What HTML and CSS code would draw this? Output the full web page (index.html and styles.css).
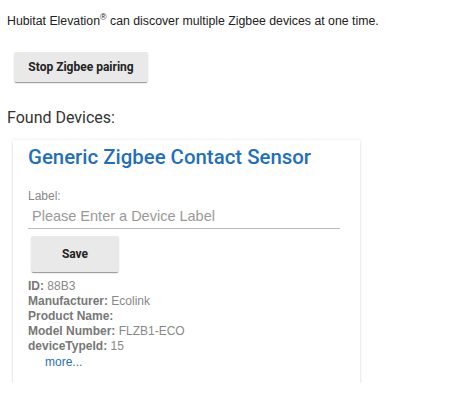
FILE: index.html
```html
<!DOCTYPE html>
<html>
<head>
<meta charset="utf-8">
<link rel="stylesheet" href="styles.css">
</head>
<body>
<div class="page">
  <p class="intro">Hubitat Elevation<sup>®</sup> can discover multiple Zigbee devices at one time.</p>
  <button class="btn stop">Stop Zigbee pairing</button>
  <h3 class="found">Found Devices:</h3>
  <div class="card">
    <h2 class="title">Generic Zigbee Contact Sensor</h2>
    <label class="label">Label:</label>
    <div class="field"><input class="input" type="text" placeholder="Please Enter a Device Label"></div>
    <button class="btn save">Save</button>
    <div class="info">
      <div><b>ID:</b> 88B3</div>
      <div><b>Manufacturer:</b> Ecolink</div>
      <div><b>Product Name:</b></div>
      <div><b>Model Number:</b> FLZB1-ECO</div>
      <div><b>deviceTypeId:</b> 15</div>
      <div class="more">more...</div>
    </div>
  </div>
</div>
</body>
</html>
```
FILE: styles.css
```css
html, body { margin: 0; padding: 0; background: #fff; }
.page { padding: 0 0 0 7px; font-family: "Liberation Sans", Arial, sans-serif; }
.intro { margin: 0; padding-top: 13px; font-size: 12.3px; line-height: 16px; color: #222; }
.intro sup { font-size: 9px; line-height: 0; vertical-align: 5px; }
.btn {
  display: block; border: none; border-radius: 2px;
  background: #e9e9e9; color: #222;
  font-family: Roboto, sans-serif; font-weight: 700; font-size: 12px;
  box-shadow: 0 2px 1px -1px rgba(0,0,0,0.35), 0 1px 2px rgba(0,0,0,0.12);
  padding: 0;
}
.stop { margin: 23px 0 0 7px; width: 134px; height: 30px; }
.found { margin: 26px 0 0 0; font-family: Roboto, sans-serif; font-weight: 400; font-size: 16px; line-height: 20px; color: #333; }
.card {
  margin: 12px 0 0 6px; width: 332px; height: 243px; padding: 0 0 0 15px;
  background: #fff; box-shadow: 0 2px 2px -1px rgba(0,0,0,0.45), 0 0 3px rgba(0,0,0,0.12);
}
.title { margin: 0; padding-top: 5px; font-family: Roboto, sans-serif; font-weight: 500; font-size: 20.4px; line-height: 24px; color: #1f6fbb; }
.label { display: block; margin-top: 20px; font-size: 12px; line-height: 14px; color: #888; }
.field { width: 312px; border-bottom: 1px solid #bbb; margin-top: 3px; }
.input { border: none; outline: none; padding: 2px 0 3px 4px; width: 300px; font-family: "Liberation Sans", Arial, sans-serif; font-size: 14.5px; line-height: 17px; background: transparent; }
.input::placeholder { color: #999; }
.save { margin: 7px 0 0 3px; width: 88px; height: 36px; }
.info { margin-top: 7px; font-size: 12px; line-height: 15px; color: #888; }
.info b { color: #777; }
.more { color: #1f6fbb; padding-left: 17px; margin-top: 1px; }
```
